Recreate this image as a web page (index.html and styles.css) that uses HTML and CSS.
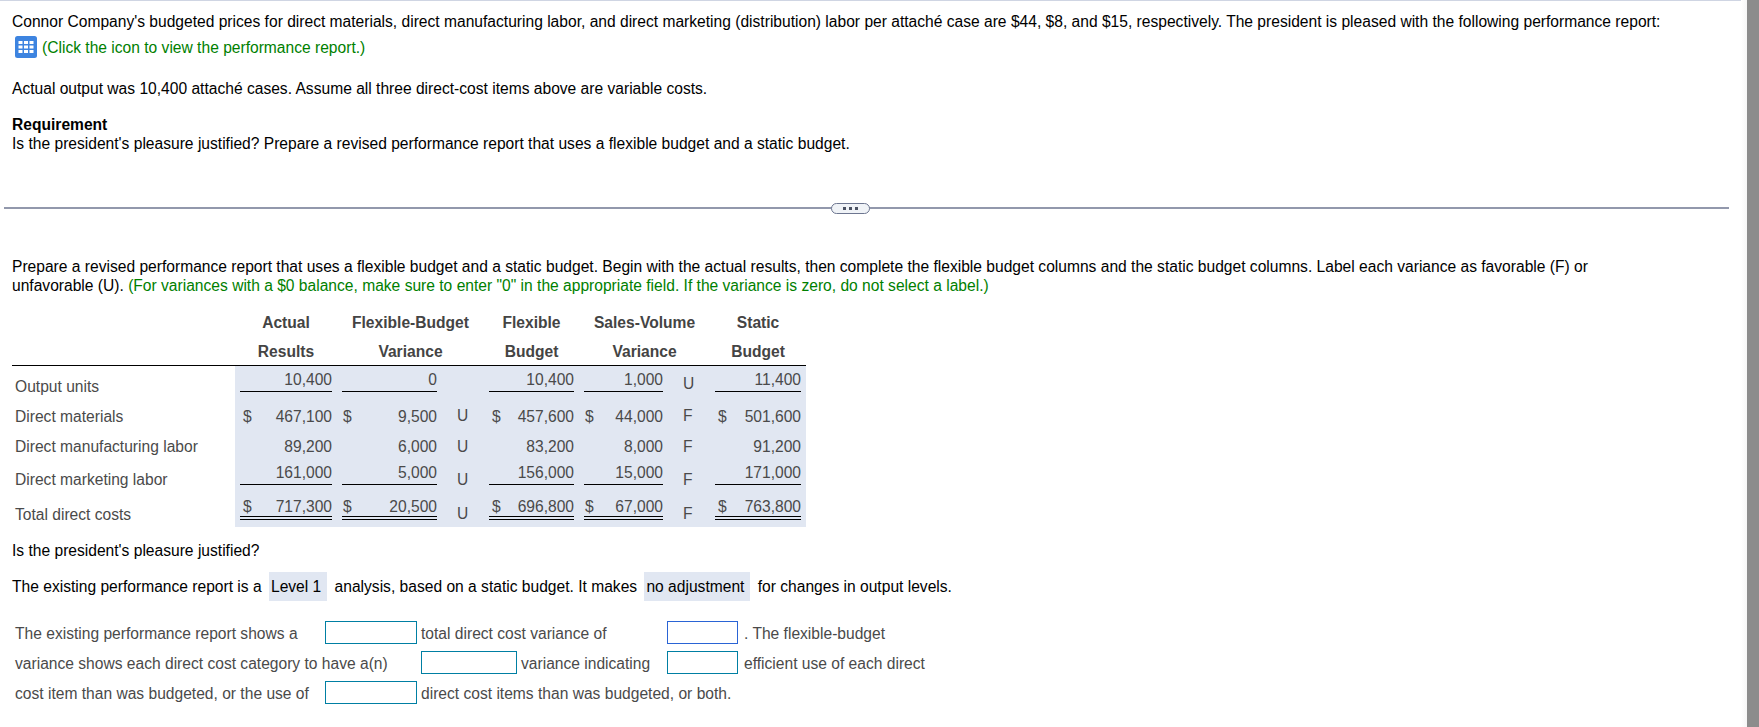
FILE: index.html
```html
<!DOCTYPE html>
<html>
<head>
  <meta name="viewport" content="width=device-width, initial-scale=1.0">
  <link rel="stylesheet" href="styles.css">
</head>
<body>
  <div class="app">
    <div class="page">
      <div class="question">
        <p class="line">Connor Company's budgeted prices for direct materials, direct manufacturing labor, and direct marketing (distribution) labor per attaché case are $44, $8, and $15, respectively. The president is pleased with the following performance report:</p>
        <p class="line icon-line">
          <svg class="grid-icon" width="22" height="22" viewBox="0 0 22 22">
            <rect width="22" height="22" rx="2.5" fill="#3d84e0"/>
            <g fill="#fff">
              <rect x="3.5" y="5" width="4" height="3"/><rect x="9" y="5" width="4" height="3"/><rect x="14.5" y="5" width="4" height="3"/>
              <rect x="3.5" y="9.5" width="4" height="3"/><rect x="9" y="9.5" width="4" height="3"/><rect x="14.5" y="9.5" width="4" height="3"/>
              <rect x="3.5" y="14" width="4" height="3"/><rect x="9" y="14" width="4" height="3"/><rect x="14.5" y="14" width="4" height="3"/>
            </g>
          </svg>
          <span class="green">(Click the icon to view the performance report.)</span>
        </p>
        <p class="line actual">Actual output was 10,400 attaché cases. Assume all three direct-cost items above are variable costs.</p>
        <p class="line req"><b>Requirement</b></p>
        <p class="line">Is the president's pleasure justified? Prepare a revised performance report that uses a flexible budget and a static budget.</p>
      </div>

      <div class="divider"><button class="more"><i></i><i></i><i></i></button></div>

      <div class="answer">
        <p class="line">Prepare a revised performance report that uses a flexible budget and a static budget. Begin with the actual results, then complete the flexible budget columns and the static budget columns. Label each variance as favorable (F) or<br>unfavorable (U). <span class="green">(For variances with a $0 balance, make sure to enter "0" in the appropriate field. If the variance is zero, do not select a label.)</span></p>

        <table class="report">
          <colgroup>
            <col class="c-label"><col class="c-actual"><col class="c-fvar"><col class="c-mark"><col class="c-flex"><col class="c-svar"><col class="c-mark2"><col class="c-static">
          </colgroup>
          <thead>
            <tr class="h1"><th></th><th>Actual</th><th colspan="2">Flexible-Budget</th><th>Flexible</th><th colspan="2">Sales-Volume</th><th>Static</th></tr>
            <tr class="h2"><th></th><th>Results</th><th colspan="2">Variance</th><th>Budget</th><th colspan="2">Variance</th><th>Budget</th></tr>
          </thead>
          <tbody>
            <tr class="r1">
              <td class="lbl">Output units</td>
              <td class="num"><div class="amt under"><span></span>10,400</div></td>
              <td class="num"><div class="amt under"><span></span>0</div></td>
              <td class="mark"></td>
              <td class="num"><div class="amt under"><span></span>10,400</div></td>
              <td class="num"><div class="amt under"><span></span>1,000</div></td>
              <td class="mark">U</td>
              <td class="num"><div class="amt under"><span></span>11,400</div></td>
            </tr>
            <tr class="r2">
              <td class="lbl">Direct materials</td>
              <td class="num"><div class="amt"><span>$</span>467,100</div></td>
              <td class="num"><div class="amt"><span>$</span>9,500</div></td>
              <td class="mark">U</td>
              <td class="num"><div class="amt"><span>$</span>457,600</div></td>
              <td class="num"><div class="amt"><span>$</span>44,000</div></td>
              <td class="mark">F</td>
              <td class="num"><div class="amt"><span>$</span>501,600</div></td>
            </tr>
            <tr class="r3">
              <td class="lbl">Direct manufacturing labor</td>
              <td class="num"><div class="amt"><span></span>89,200</div></td>
              <td class="num"><div class="amt"><span></span>6,000</div></td>
              <td class="mark">U</td>
              <td class="num"><div class="amt"><span></span>83,200</div></td>
              <td class="num"><div class="amt"><span></span>8,000</div></td>
              <td class="mark">F</td>
              <td class="num"><div class="amt"><span></span>91,200</div></td>
            </tr>
            <tr class="r4">
              <td class="lbl">Direct marketing labor</td>
              <td class="num"><div class="amt under"><span></span>161,000</div></td>
              <td class="num"><div class="amt under"><span></span>5,000</div></td>
              <td class="mark">U</td>
              <td class="num"><div class="amt under"><span></span>156,000</div></td>
              <td class="num"><div class="amt under"><span></span>15,000</div></td>
              <td class="mark">F</td>
              <td class="num"><div class="amt under"><span></span>171,000</div></td>
            </tr>
            <tr class="r5">
              <td class="lbl">Total direct costs</td>
              <td class="num"><div class="amt dbl"><span>$</span>717,300</div></td>
              <td class="num"><div class="amt dbl"><span>$</span>20,500</div></td>
              <td class="mark">U</td>
              <td class="num"><div class="amt dbl"><span>$</span>696,800</div></td>
              <td class="num"><div class="amt dbl"><span>$</span>67,000</div></td>
              <td class="mark">F</td>
              <td class="num"><div class="amt dbl"><span>$</span>763,800</div></td>
            </tr>
          </tbody>
        </table>

        <p class="line justified">Is the president's pleasure justified?</p>
        <p class="line existing">The existing performance report is a <span class="pick p-level">Level 1</span> analysis, based on a static budget. It makes <span class="pick p-adj">no adjustment</span> for changes in output levels.</p>

        <div class="blanks">
          <div class="blank-row"><span class="t1">The existing performance report shows a</span><span class="box b1"></span><span class="t2">total direct cost variance of</span><span class="box b3 active"></span><span>. The flexible-budget</span></div>
          <div class="blank-row"><span class="t1b">variance shows each direct cost category to have a(n)</span><span class="box b2"></span><span class="t2b">variance indicating</span><span class="box b3"></span><span>efficient use of each direct</span></div>
          <div class="blank-row"><span class="t1">cost item than was budgeted, or the use of</span><span class="box b1"></span><span>direct cost items than was budgeted, or both.</span></div>
        </div>
      </div>
    </div>
    <div class="gutter"></div>
    <div class="scrollbar"></div>
  </div>
</body>
</html>
```

FILE: styles.css
```css
* {
  margin: 0;
  padding: 0;
  box-sizing: border-box;
}

body {
  height: 100vh;
  overflow: hidden;
  background: #fff;
  font-family: 'Liberation Sans', Arial, sans-serif;
  font-size: 15.6px;
  color: #000;
}

.app {
  display: flex;
  height: 100%;
}

.page {
  width: 1741px;
  border-top: 1px solid #cfd5e3;
}

.gutter {
  width: 6px;
  background: linear-gradient(to right, #fff, #f6f6f6);
}

.scrollbar {
  width: 12px;
  background: #8c8c8c;
}

.line {
  line-height: 19px;
}

.green {
  color: #008000;
}

.question {
  padding: 11px 12px 0;
}

.icon-line {
  display: flex;
  align-items: center;
  gap: 5px;
  margin-top: 5px;
  padding-left: 3px;
}

.actual {
  margin-top: 21px;
}

.req {
  margin-top: 18px;
  line-height: 18px;
}

.divider {
  margin: 54px 12px 0 4px;
  padding-right: 32px;
  height: 2px;
  background: #9298ac;
  display: flex;
  justify-content: center;
  align-items: center;
}

.more {
  width: 39px;
  height: 11px;
  border: 1px solid #6d7690;
  border-radius: 6px;
  background: #f0f3f7;
  display: flex;
  justify-content: center;
  align-items: center;
  gap: 3px;
}

.more i {
  width: 3px;
  height: 3px;
  background: #4b5263;
}

.answer {
  padding: 48px 12px 0;
}

.report {
  margin-top: 12px;
  border-collapse: collapse;
  table-layout: fixed;
  width: 794px;
  color: #4a4a4a;
}

.c-label { width: 223px; }
.c-actual { width: 102px; }
.c-fvar { width: 105px; }
.c-mark { width: 42px; }
.c-flex { width: 95px; }
.c-svar { width: 89px; }
.c-mark2 { width: 42px; }
.c-static { width: 96px; }

.report th {
  font-weight: bold;
  text-align: center;
  line-height: 19px;
  color: #444;
}

.h1 { height: 31px; }
.h2 { height: 27px; }
.h2 th {
  border-bottom: 1px solid #000;
}

.report td {
  line-height: 19px;
}

.report td:not(.lbl) {
  background: #e1e7f2;
}

.lbl {
  padding-left: 3px;
}

.num {
  padding: 0 5px;
  vertical-align: top;
}

.amt {
  display: flex;
  justify-content: space-between;
}

.amt span {
  margin-left: 1px;
}

.report td:nth-child(2) .amt span,
.report td:nth-child(5) .amt span,
.report td:nth-child(8) .amt span {
  margin-left: 3px;
}

.under {
  border-bottom: 1px solid #000;
}

.dbl {
  border-bottom: 4px double #000;
}

.mark {
  text-align: left;
  padding-left: 15px;
}

.r1 { height: 34px; }
.r2 { height: 32px; }
.r3 { height: 30px; }
.r4 { height: 33px; }
.r5 { height: 33px; }

.r1 .num { padding-top: 4px; }
.r1 .amt { padding-bottom: 2px; }
.r1 .lbl { padding-top: 8px; }
.r1 .mark { padding-top: 3px; }
.r2 .num { padding-top: 8px; }
.r2 .lbl { padding-top: 3px; }
.r3 .num { padding-top: 6px; }
.r4 .num { padding-top: 2px; }
.r4 .amt { padding-bottom: 2px; }
.r4 .lbl { padding-top: 3px; }
.r4 .mark { padding-top: 4px; }
.r5 .num { padding-top: 3px; }
.r5 .lbl { padding-top: 8px; }
.r5 .mark { padding-top: 5px; }

.justified {
  margin-top: 14px;
}

.existing {
  margin-top: 12px;
}

.pick {
  display: inline-block;
  background: #e1e7f2;
  line-height: 29px;
  padding: 0 6px 0 2px;
  margin: 0 3px 0 3px;
}

.blanks {
  margin-top: 18px;
  color: #4a4a4a;
  padding-left: 3px;
}

.blank-row {
  display: flex;
  align-items: center;
  height: 30px;
}

.box {
  display: block;
  height: 23px;
  border: 1px solid #007fa3;
  flex: none;
  margin-bottom: 3px;
}

.b1 { width: 92px; margin-right: 4px; }
.b2 { width: 96px; margin-right: 4px; }
.b3 { width: 71px; margin-right: 6px; }
.active { border-color: #2a64d5; }

.t1 { width: 310px; flex: none; }
.t1b { width: 406px; flex: none; }
.t2 { width: 246px; flex: none; }
.t2b { width: 146px; flex: none; }
```
